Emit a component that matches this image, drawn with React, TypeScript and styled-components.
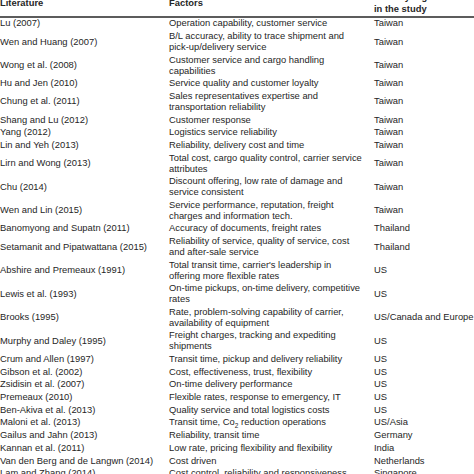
import React from "react";
import styled, { createGlobalStyle } from "styled-components";

const GlobalStyle = createGlobalStyle`
  html, body {
    margin: 0;
    padding: 0;
    background: #fff;
    overflow: hidden;
  }
  body {
    font-family: "Liberation Sans", Arial, sans-serif;
    color: #262626;
  }
`;

const Page = styled.div`
  width: 474px;
  height: 474px;
  overflow: hidden;
`;

const Table = styled.div`
  margin-top: -9.5px;
  font-size: 9.4px;
  line-height: 10.9px;
`;

const Row = styled.div<{ $head?: boolean }>`
  display: grid;
  grid-template-columns: 169px 205px 1fr;
  align-items: center;
  padding: ${(p) => (p.$head ? "0" : "0.9px 0")};
  border-bottom: ${(p) => (p.$head ? "2px solid #5c5c5c" : "none")};
  font-weight: ${(p) => (p.$head ? 700 : 400)};
  line-height: ${(p) => (p.$head ? "12.5px" : "10.9px")};
`;

const Cell = styled.div`
  white-space: nowrap;
`;

const Sub = styled.sub`
  font-size: 6.5px;
  line-height: 0;
`;

type Entry = {
  lit: string;
  factors: React.ReactNode[];
  place: string;
};

const rows: Entry[] = [
  { lit: "Lu (2007)", factors: ["Operation capability, customer service"], place: "Taiwan" },
  { lit: "Wen and Huang (2007)", factors: ["B/L accuracy, ability to trace shipment and", "pick-up/delivery service"], place: "Taiwan" },
  { lit: "Wong et al. (2008)", factors: ["Customer service and cargo handling", "capabilities"], place: "Taiwan" },
  { lit: "Hu and Jen (2010)", factors: ["Service quality and customer loyalty"], place: "Taiwan" },
  { lit: "Chung et al. (2011)", factors: ["Sales representatives expertise and", "transportation reliability"], place: "Taiwan" },
  { lit: "Shang and Lu (2012)", factors: ["Customer response"], place: "Taiwan" },
  { lit: "Yang (2012)", factors: ["Logistics service reliability"], place: "Taiwan" },
  { lit: "Lin and Yeh (2013)", factors: ["Reliability, delivery cost and time"], place: "Taiwan" },
  { lit: "Lirn and Wong (2013)", factors: ["Total cost, cargo quality control, carrier service", "attributes"], place: "Taiwan" },
  { lit: "Chu (2014)", factors: ["Discount offering, low rate of damage and", "service consistent"], place: "Taiwan" },
  { lit: "Wen and Lin (2015)", factors: ["Service performance, reputation, freight", "charges and information tech."], place: "Taiwan" },
  { lit: "Banomyong and Supatn (2011)", factors: ["Accuracy of documents, freight rates"], place: "Thailand" },
  { lit: "Setamanit and Pipatwattana (2015)", factors: ["Reliability of service, quality of service, cost", "and after-sale service"], place: "Thailand" },
  { lit: "Abshire and Premeaux (1991)", factors: ["Total transit time, carrier's leadership in", "offering more flexible rates"], place: "US" },
  { lit: "Lewis et al. (1993)", factors: ["On-time pickups, on-time delivery, competitive", "rates"], place: "US" },
  { lit: "Brooks (1995)", factors: ["Rate, problem-solving capability of carrier,", "availability of equipment"], place: "US/Canada and Europe" },
  { lit: "Murphy and Daley (1995)", factors: ["Freight charges, tracking and expediting", "shipments"], place: "US" },
  { lit: "Crum and Allen (1997)", factors: ["Transit time, pickup and delivery reliability"], place: "US" },
  { lit: "Gibson et al. (2002)", factors: ["Cost, effectiveness, trust, flexibility"], place: "US" },
  { lit: "Zsidisin et al. (2007)", factors: ["On-time delivery performance"], place: "US" },
  { lit: "Premeaux (2010)", factors: ["Flexible rates, response to emergency, IT"], place: "US" },
  { lit: "Ben-Akiva et al. (2013)", factors: ["Quality service and total logistics costs"], place: "US" },
  { lit: "Maloni et al. (2013)", factors: [<>Transit time, Co<Sub>2</Sub> reduction operations</>], place: "US/Asia" },
  { lit: "Gailus and Jahn (2013)", factors: ["Reliability, transit time"], place: "Germany" },
  { lit: "Kannan et al. (2011)", factors: ["Low rate, pricing flexibility and flexibility"], place: "India" },
  { lit: "Van den Berg and de Langwn (2014)", factors: ["Cost driven"], place: "Netherlands" },
  { lit: "Lam and Zhang (2014)", factors: ["Cost control, reliability and responsiveness"], place: "Singapore" },
];

function Lines({ items }: { items: React.ReactNode[] }) {
  return (
    <>
      {items.map((t, i) => (
        <div key={i}>{t}</div>
      ))}
    </>
  );
}

export default function App() {
  return (
    <Page>
      <GlobalStyle />
      <Table>
        <Row $head>
          <Cell>Literature</Cell>
          <Cell>Factors</Cell>
          <Cell>
            <div>Country/region involved</div>
            <div>in the study</div>
          </Cell>
        </Row>
        {rows.map((r) => (
          <Row key={r.lit}>
            <Cell>{r.lit}</Cell>
            <Cell>
              <Lines items={r.factors} />
            </Cell>
            <Cell>{r.place}</Cell>
          </Row>
        ))}
      </Table>
    </Page>
  );
}
